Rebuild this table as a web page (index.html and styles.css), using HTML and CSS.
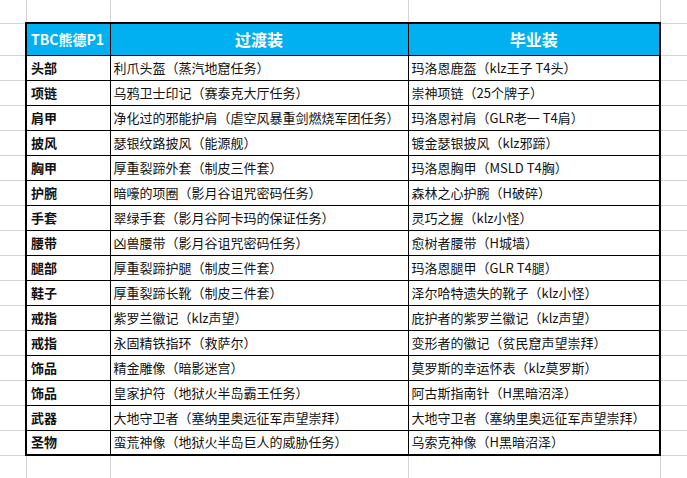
FILE: index.html
```html
<!DOCTYPE html>
<html lang="zh-CN">
<head>
<meta charset="utf-8">
<title>TBC熊德P1</title>
<link rel="stylesheet" href="styles.css">
</head>
<body>
<table class="sheet">
  <colgroup>
    <col class="c-gutter">
    <col class="c-slot">
    <col class="c-mid">
    <col class="c-end">
    <col class="c-rest">
  </colgroup>
  <tbody>
    <tr class="r-top"><td></td><td></td><td></td><td></td><td></td></tr>
    <tr class="r-head">
      <td></td>
      <td class="d h h-left">TBC熊德P1</td>
      <td class="d h">过渡装</td>
      <td class="d h h-last">毕业装</td>
      <td></td>
    </tr>
    <tr><td></td><td class="d k">头部</td><td class="d">利爪头盔（蒸汽地窟任务）</td><td class="d e">玛洛恩鹿盔（klz王子 T4头）</td><td></td></tr>
    <tr><td></td><td class="d k">项链</td><td class="d">乌鸦卫士印记（赛泰克大厅任务）</td><td class="d e">崇神项链（25个牌子）</td><td></td></tr>
    <tr><td></td><td class="d k">肩甲</td><td class="d">净化过的邪能护肩（虐空风暴重剑燃烧军团任务）</td><td class="d e">玛洛恩衬肩（GLR老一 T4肩）</td><td></td></tr>
    <tr><td></td><td class="d k">披风</td><td class="d">瑟银纹路披风（能源舰）</td><td class="d e">镀金瑟银披风（klz邪蹄）</td><td></td></tr>
    <tr><td></td><td class="d k">胸甲</td><td class="d">厚重裂蹄外套（制皮三件套）</td><td class="d e">玛洛恩胸甲（MSLD T4胸）</td><td></td></tr>
    <tr><td></td><td class="d k">护腕</td><td class="d">暗嚎的项圈（影月谷诅咒密码任务）</td><td class="d e">森林之心护腕（H破碎）</td><td></td></tr>
    <tr><td></td><td class="d k">手套</td><td class="d">翠绿手套（影月谷阿卡玛的保证任务）</td><td class="d e">灵巧之握（klz小怪）</td><td></td></tr>
    <tr><td></td><td class="d k">腰带</td><td class="d">凶兽腰带（影月谷诅咒密码任务）</td><td class="d e">愈树者腰带（H城墙）</td><td></td></tr>
    <tr><td></td><td class="d k">腿部</td><td class="d">厚重裂蹄护腿（制皮三件套）</td><td class="d e">玛洛恩腿甲（GLR T4腿）</td><td></td></tr>
    <tr><td></td><td class="d k">鞋子</td><td class="d">厚重裂蹄长靴（制皮三件套）</td><td class="d e">泽尔哈特遗失的靴子（klz小怪）</td><td></td></tr>
    <tr><td></td><td class="d k">戒指</td><td class="d">紫罗兰徽记（klz声望）</td><td class="d e">庇护者的紫罗兰徽记（klz声望）</td><td></td></tr>
    <tr><td></td><td class="d k">戒指</td><td class="d">永固精铁指环（救萨尔）</td><td class="d e">变形者的徽记（贫民窟声望崇拜）</td><td></td></tr>
    <tr><td></td><td class="d k">饰品</td><td class="d">精金雕像（暗影迷宫）</td><td class="d e">莫罗斯的幸运怀表（klz莫罗斯）</td><td></td></tr>
    <tr><td></td><td class="d k">饰品</td><td class="d">皇家护符（地狱火半岛霸王任务）</td><td class="d e">阿古斯指南针（H黑暗沼泽）</td><td></td></tr>
    <tr><td></td><td class="d k">武器</td><td class="d">大地守卫者（塞纳里奥远征军声望崇拜）</td><td class="d e">大地守卫者（塞纳里奥远征军声望崇拜）</td><td></td></tr>
    <tr class="r-last"><td></td><td class="d k">圣物</td><td class="d">蛮荒神像（地狱火半岛巨人的威胁任务）</td><td class="d e">乌索克神像（H黑暗沼泽）</td><td></td></tr>
    <tr class="r-end"><td></td><td></td><td></td><td></td><td></td></tr>
  </tbody>
</table>
</body>
</html>
```

FILE: styles.css
```css
* { box-sizing: border-box; }
html, body { margin: 0; padding: 0; background: #fff; overflow: hidden; }
body {
  width: 687px;
  height: 478px;
  font-family: "Noto Sans CJK SC", "Liberation Sans", sans-serif;
  color: #111;
}
.sheet {
  border-collapse: collapse;
  table-layout: fixed;
  width: 712px;
}
.c-gutter { width: 26px; }
.c-slot { width: 84px; }
.c-mid { width: 298px; }
.c-end { width: 252px; }
.c-rest { width: 52px; }
.sheet td {
  border: 1px solid #d4d4d4;
  padding: 0 3px;
  height: 25px;
  font-size: 13px;
  line-height: 16px;
  white-space: nowrap;
  overflow: hidden;
  vertical-align: middle;
}
.sheet tr:first-child td { border-top: none; }
.sheet td:first-child { border-left: none; }
.r-top td { height: 23px; }
.r-head td { height: 32px; }
.r-end td { height: 23px; }
.sheet td.d { border: 1px solid #000; }
.sheet td.h {
  background: #00b0f0;
  color: #fff;
  font-weight: 700;
  font-size: 16px;
  text-align: center;
  border-top: 2px solid #000;
}
.sheet td.h-left { text-align: left; font-size: 14px; padding-left: 4px; }
.sheet td.k, .sheet td.h-left { border-left: 2px solid #000; }
.sheet td.k { font-weight: 700; padding-left: 4px; }
.sheet td.e, .sheet td.h-last { border-right: 2px solid #000; }
.r-last td.d { border-bottom: 2px solid #000; }
```
